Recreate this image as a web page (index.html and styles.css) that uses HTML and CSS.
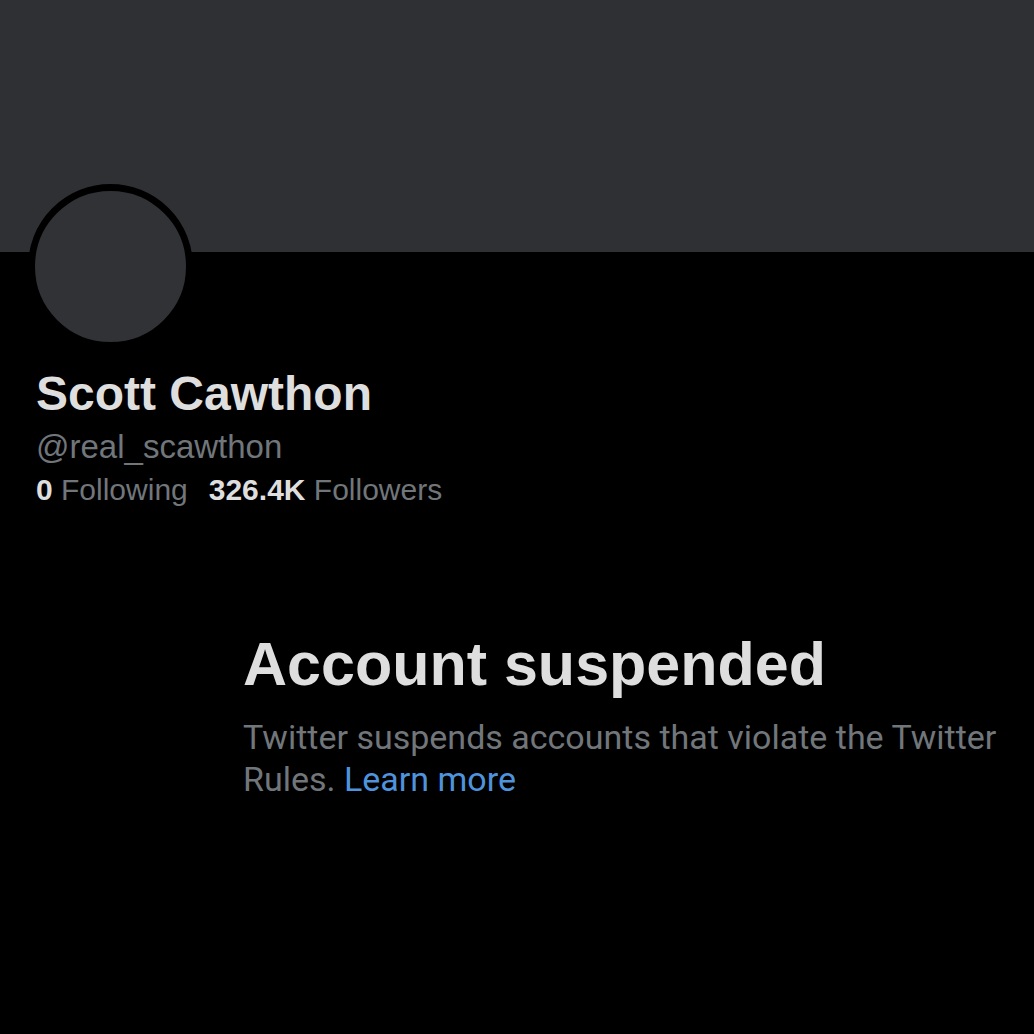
FILE: index.html
```html
<!DOCTYPE html>
<html lang="en">
<head>
    <meta charset="UTF-8">
    <meta name="viewport" content="width=device-width, initial-scale=1.0">
    <title>Scott Cawthon (@real_scawthon)</title>
    <link rel="stylesheet" href="styles.css">
</head>
<body>

<header class="banner"></header>

<section class="profile">
    <div class="avatar"></div>
    <h1 class="name">Scott Cawthon</h1>
    <div class="handle">@real_scawthon</div>
    <div class="stats">
        <a href="#" class="stat"><b>0</b> Following</a>
        <a href="#" class="stat"><b>326.4K</b> Followers</a>
    </div>
</section>

<section class="suspended">
    <h2>Account suspended</h2>
    <p>Twitter suspends accounts that violate the Twitter Rules. <a href="#">Learn more</a></p>
</section>

</body>
</html>
```

FILE: styles.css
```css
* {
    margin: 0;
    padding: 0;
    box-sizing: border-box;
}
body {
    font-family: 'Liberation Sans', Arial, sans-serif;
    background-color: #000;
    color: #e1e1e1;
}
.banner {
    height: 252px;
    background-color: #2f3034;
}
.profile {
    padding-left: 36px;
}
.avatar {
    width: 165px;
    height: 165px;
    margin-top: -68px;
    margin-left: -8px;
    border-radius: 50%;
    border: 7px solid #000;
    background-color: #313236;
}
.name {
    margin-top: 17px;
    font-size: 48px;
    line-height: 56px;
    font-weight: 700;
    color: #dedede;
}
.handle {
    margin-top: 5px;
    font-size: 33px;
    line-height: 40px;
    color: #71767b;
}
.stats {
    display: flex;
    gap: 21px;
    margin-top: 5px;
    font-size: 30px;
    line-height: 36px;
}
.stat {
    color: #71767b;
    text-decoration: none;
}
.stat b {
    color: #dedede;
}
.suspended {
    margin-top: 120px;
    padding-left: 243px;
}
.suspended h2 {
    font-size: 61px;
    line-height: 72px;
    font-weight: 700;
    color: #dedede;
}
.suspended p {
    max-width: 780px;
    margin-top: 16px;
    font-family: Roboto, 'Liberation Sans', sans-serif;
    font-size: 34px;
    line-height: 42px;
    color: #71767b;
}
.suspended p a {
    color: #4f93dc;
    text-decoration: none;
}
```
